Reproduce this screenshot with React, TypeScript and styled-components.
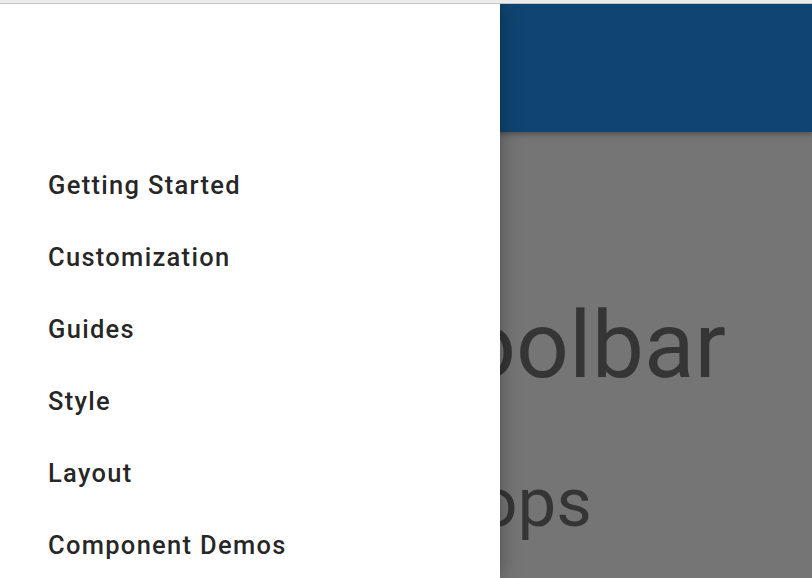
import React from 'react';
import styled, { createGlobalStyle } from 'styled-components';

const GlobalStyle = createGlobalStyle`
  html, body {
    margin: 0;
    padding: 0;
    background: #ffffff;
  }
  body {
    font-family: Roboto, 'Noto Sans', sans-serif;
  }
`;

/* 전체 화면 */
const Frame = styled.div`
  width: 812px;
  height: 578px;
  display: flex;
  flex-direction: column;
  overflow: hidden;
`;

/* 상단 브라우저 경계선 */
const TopStrip = styled.div`
  height: 3px;
  flex: 0 0 auto;
  background: #ececec;
  border-bottom: 1px solid #c4c4c4;
`;

const Viewport = styled.div`
  position: relative;
  flex: 1 1 auto;
  overflow: hidden;
`;

const AppBar = styled.header`
  height: 128px;
  background: #2196f3;
  box-shadow: 0 2px 6px rgba(0, 0, 0, 0.35);
`;

const Main = styled.main`
  padding: 167px 0 0 412px;
  color: rgba(0, 0, 0, 0.54);
  white-space: nowrap;
`;

const Title = styled.h1<{ $size: number; $gap?: number }>`
  margin: 0 0 ${(p) => p.$gap ?? 0}px;
  font-size: ${(p) => p.$size}px;
  line-height: ${(p) => p.$size}px;
  font-weight: 400;
`;

/* 드로어 뒤 어두운 배경 */
const Backdrop = styled.div`
  position: absolute;
  inset: 0;
  background: rgba(0, 0, 0, 0.54);
`;

const Drawer = styled.nav`
  position: absolute;
  top: 0;
  left: 0;
  bottom: 0;
  width: 500px;
  background: #ffffff;
  box-shadow: 0 0 18px rgba(0, 0, 0, 0.35);
`;

const DrawerHeader = styled.div`
  height: 128px;
`;

const NavList = styled.ul`
  list-style: none;
  margin: 0;
  padding: 17px 0 0;
`;

const NavItem = styled.li`
  height: 72px;
  line-height: 72px;
  padding-left: 48px;
  font-size: 25.5px;
  font-weight: 500;
  letter-spacing: 1.3px;
  color: rgba(0, 0, 0, 0.87);
  cursor: pointer;
`;

const navItems = [
  'Getting Started',
  'Customization',
  'Guides',
  'Style',
  'Layout',
  'Component Demos',
];

const App = (): JSX.Element => (
  <>
    <GlobalStyle />
    <Frame>
      <TopStrip />
      <Viewport>
        <AppBar />
        <Main>
          <Title $size={93} $gap={76}>
            Toolbar
          </Title>
          <Title as="h2" $size={69}>
            Props
          </Title>
        </Main>
        <Backdrop />
        <Drawer>
          <DrawerHeader />
          <NavList>
            {navItems.map((item) => (
              <NavItem key={item}>{item}</NavItem>
            ))}
          </NavList>
        </Drawer>
      </Viewport>
    </Frame>
  </>
);

export default App;
